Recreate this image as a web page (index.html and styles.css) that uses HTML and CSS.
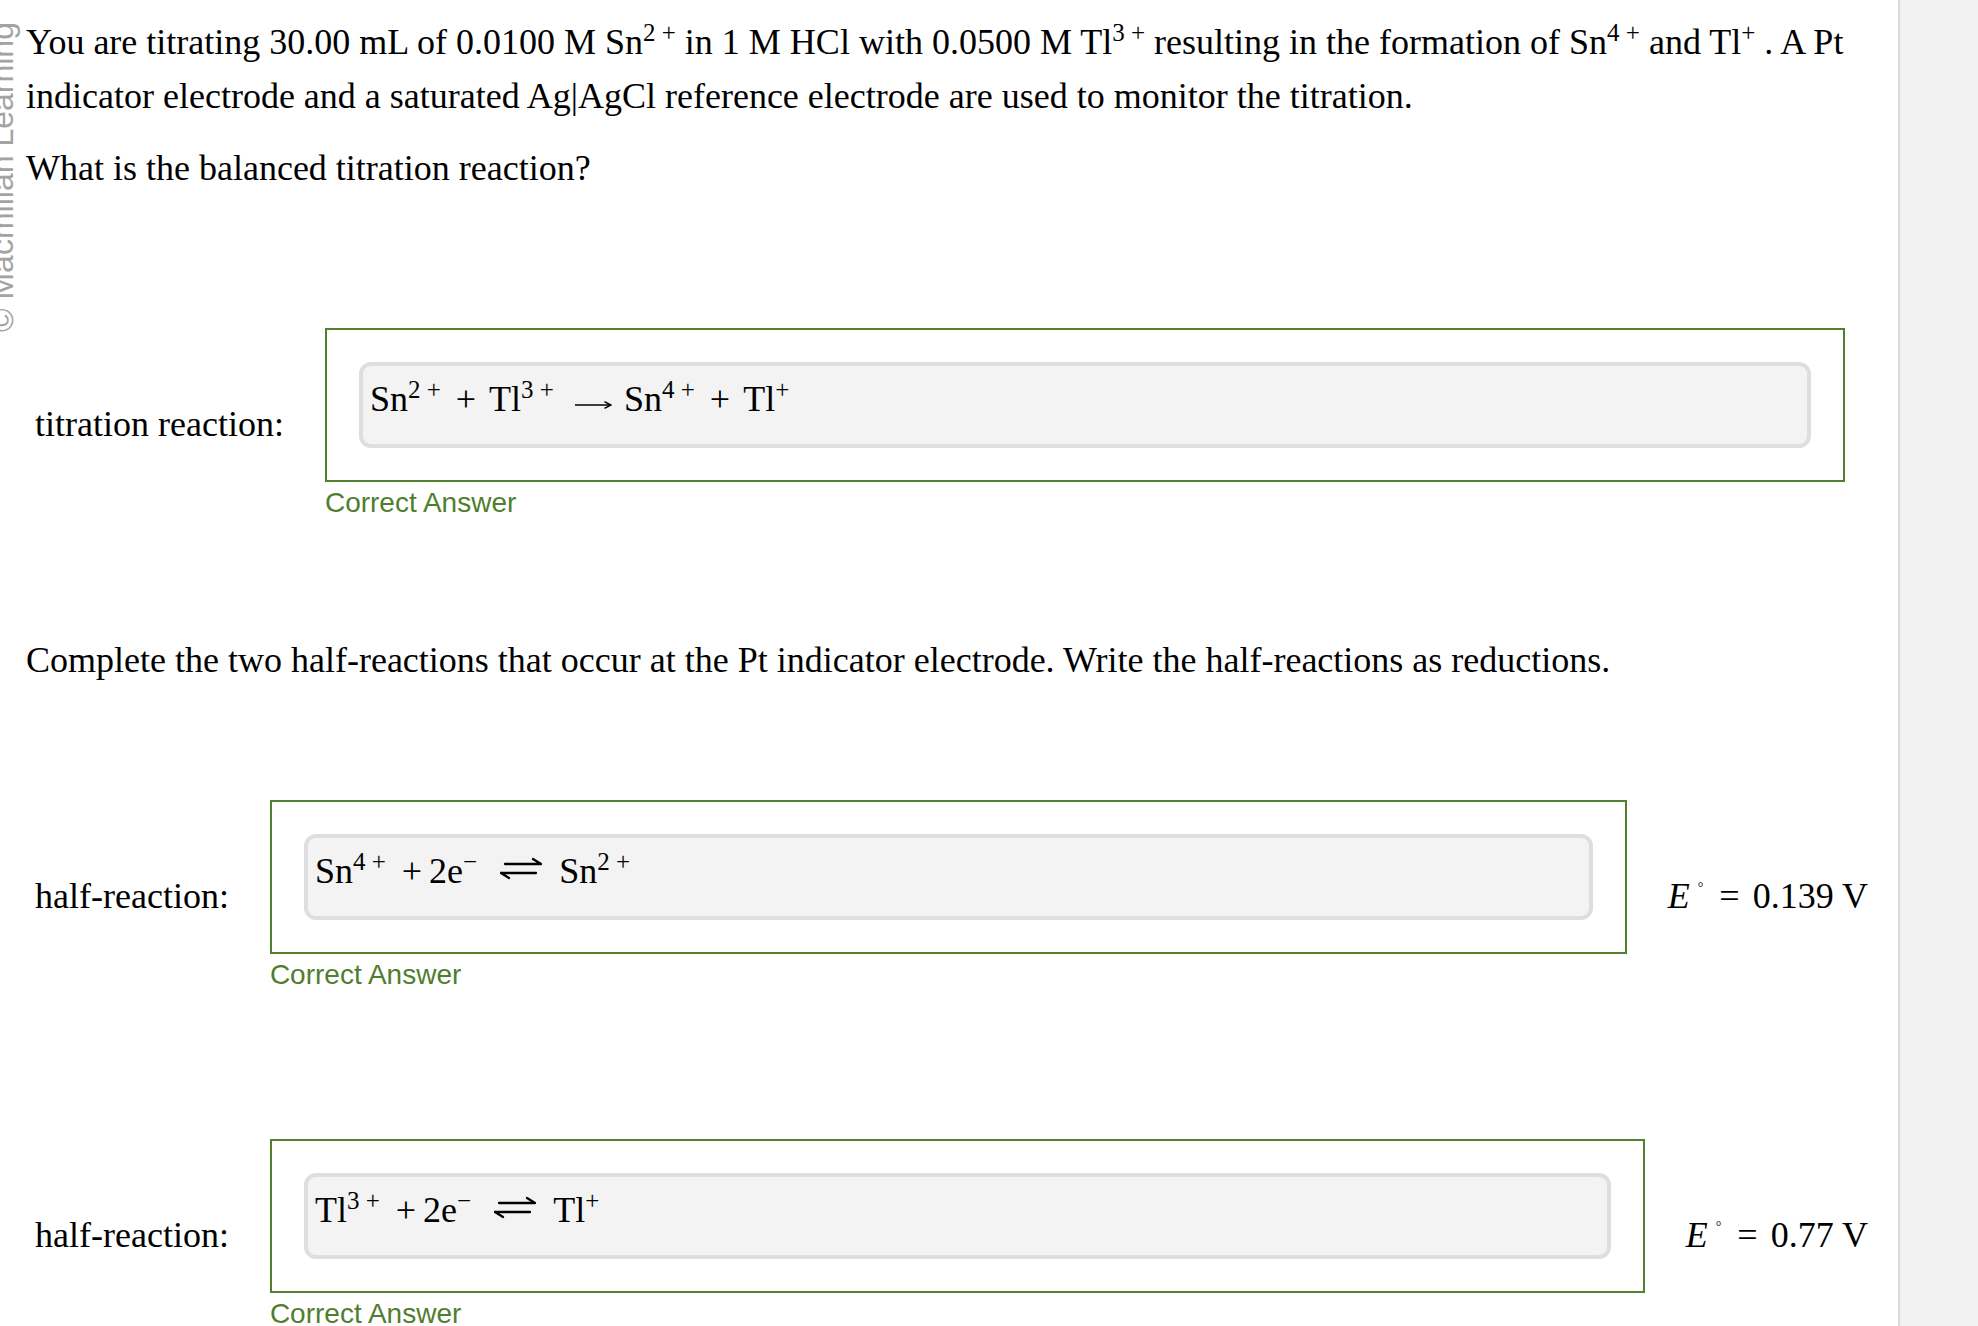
FILE: index.html
```html
<!DOCTYPE html>
<html lang="en">
<head>
<meta charset="utf-8">
<title>Titration</title>
<link rel="stylesheet" href="styles.css">
</head>
<body>
<div class="page">
  <div class="watermark">© Macmillan Learning</div>
  <main class="content">
    <p class="q">You are titrating 30.00 mL of 0.0100 M Sn<sup>2 +</sup> in 1 M HCl with 0.0500 M Tl<sup>3 +</sup> resulting in the formation of Sn<sup>4 +</sup> and Tl<sup>+</sup> . A Pt indicator electrode and a saturated Ag|AgCl reference electrode are used to monitor the titration.</p>
    <p class="q q-ask">What is the balanced titration reaction?</p>

    <div class="row row-titration">
      <div class="label">titration reaction:</div>
      <div class="answer">
        <div class="frame">
          <div class="field"><span class="sp">Sn<sup>2 +</sup></span><span class="op op-a">+</span><span class="sp">Tl<sup>3 +</sup></span><svg class="arrow" width="38" height="12" viewBox="0 0 38 12"><path d="M1 6H36" stroke="#000" stroke-width="1.6" fill="none"/><path d="M30.5 2.6L37 6L30.5 9.4" stroke="#000" stroke-width="1.5" fill="none" stroke-linejoin="miter"/></svg><span class="sp">Sn<sup>4 +</sup></span><span class="op op-a">+</span><span class="sp">Tl<sup>+</sup></span></div>
        </div>
        <div class="correct">Correct Answer</div>
      </div>
    </div>

    <p class="q q-complete">Complete the two half-reactions that occur at the Pt indicator electrode. Write the half-reactions as reductions.</p>

    <div class="row row-half row-half1">
      <div class="label">half-reaction:</div>
      <div class="answer">
        <div class="frame">
          <div class="field"><span class="sp">Sn<sup>4 +</sup></span><span class="op op-b">+</span><span class="sp">2e<sup>−</sup></span><svg class="harpoon" width="42" height="24" viewBox="0 0 42 24"><path d="M5 7H41M41 7L33 2M1 16H36M1 16L9 21" stroke="#000" stroke-width="2.3" fill="none" stroke-linecap="round"/></svg><span class="sp">Sn<sup>2 +</sup></span></div>
        </div>
        <div class="correct">Correct Answer</div>
      </div>
      <div class="potential"><i class="e">E</i><span class="deg">°</span><span class="eq">=</span>0.139 V</div>
    </div>

    <div class="row row-half row-half2">
      <div class="label">half-reaction:</div>
      <div class="answer">
        <div class="frame">
          <div class="field"><span class="sp">Tl<sup>3 +</sup></span><span class="op op-b">+</span><span class="sp">2e<sup>−</sup></span><svg class="harpoon" width="42" height="24" viewBox="0 0 42 24"><path d="M5 7H41M41 7L33 2M1 16H36M1 16L9 21" stroke="#000" stroke-width="2.3" fill="none" stroke-linecap="round"/></svg><span class="sp">Tl<sup>+</sup></span></div>
        </div>
        <div class="correct">Correct Answer</div>
      </div>
      <div class="potential"><i class="e">E</i><span class="deg">°</span><span class="eq">=</span>0.77 V</div>
    </div>
  </main>
  <aside class="side"></aside>
</div>
</body>
</html>
```

FILE: styles.css
```css
html, body {
  margin: 0;
  padding: 0;
  height: 100%;
  overflow: hidden;
  background: #ffffff;
}

.page {
  position: relative;
  display: flex;
  height: 100%;
  font-family: "Liberation Serif", "Times New Roman", serif;
  color: #000;
}

.watermark {
  position: absolute;
  left: -14px;
  top: 332px;
  transform-origin: 0 0;
  transform: rotate(-90deg);
  font-family: "Liberation Sans", Arial, sans-serif;
  font-size: 32px;
  line-height: 32px;
  white-space: nowrap;
  color: #a3a3a3;
}

.content {
  flex: 1;
  min-width: 0;
  padding: 15px 0 0 26px;
}

.side {
  width: 78px;
  background: #f2f2f2;
  border-left: 2px solid #dadada;
}

.q {
  margin: 0;
  padding-right: 30px;
  font-size: 36px;
  line-height: 54px;
}

.q-ask {
  margin-top: 18px;
}

.q-complete {
  margin-top: 114px;
}

sup {
  font-size: 25px;
  line-height: 0;
  vertical-align: 13px;
}

.row {
  display: flex;
  align-items: center;
  gap: 41px;
  margin-left: 9px;
}

.row-titration {
  margin-top: 133px;
  padding-right: 53px;
}

.row-half {
  padding-right: 30px;
}

.row-half1 {
  margin-top: 113px;
}

.row-half2 {
  margin-top: 148px;
}

.label {
  font-size: 36px;
  line-height: 54px;
  white-space: nowrap;
}

.answer {
  flex: 1;
  min-width: 0;
}

.frame {
  border: 2px solid #51802f;
  padding: 32px;
}

.field {
  box-sizing: border-box;
  height: 86px;
  padding: 6px 7px;
  background: #f3f3f3;
  border: 4px solid #dedede;
  border-radius: 12px;
  font-size: 36px;
  line-height: 54px;
  white-space: nowrap;
}

.op-a {
  margin: 0 13px 0 15px;
}

.op-b {
  margin: 0 7px 0 16px;
}

.arrow {
  vertical-align: 0;
  margin: 0 12px 0 20px;
}

.harpoon {
  vertical-align: 2px;
  margin: 0 17px 0 23px;
}

.correct {
  margin-top: 5px;
  font-family: "Liberation Sans", Arial, sans-serif;
  font-size: 28px;
  line-height: 32px;
  color: #4f7e2f;
}

.potential {
  font-size: 36px;
  line-height: 54px;
  white-space: nowrap;
}

.e {
  font-style: italic;
}

.deg {
  display: inline-block;
  margin: 0 16px 0 8px;
  font-size: 14px;
  line-height: 0;
  vertical-align: 16px;
}

.eq {
  margin-right: 13px;
}
```
